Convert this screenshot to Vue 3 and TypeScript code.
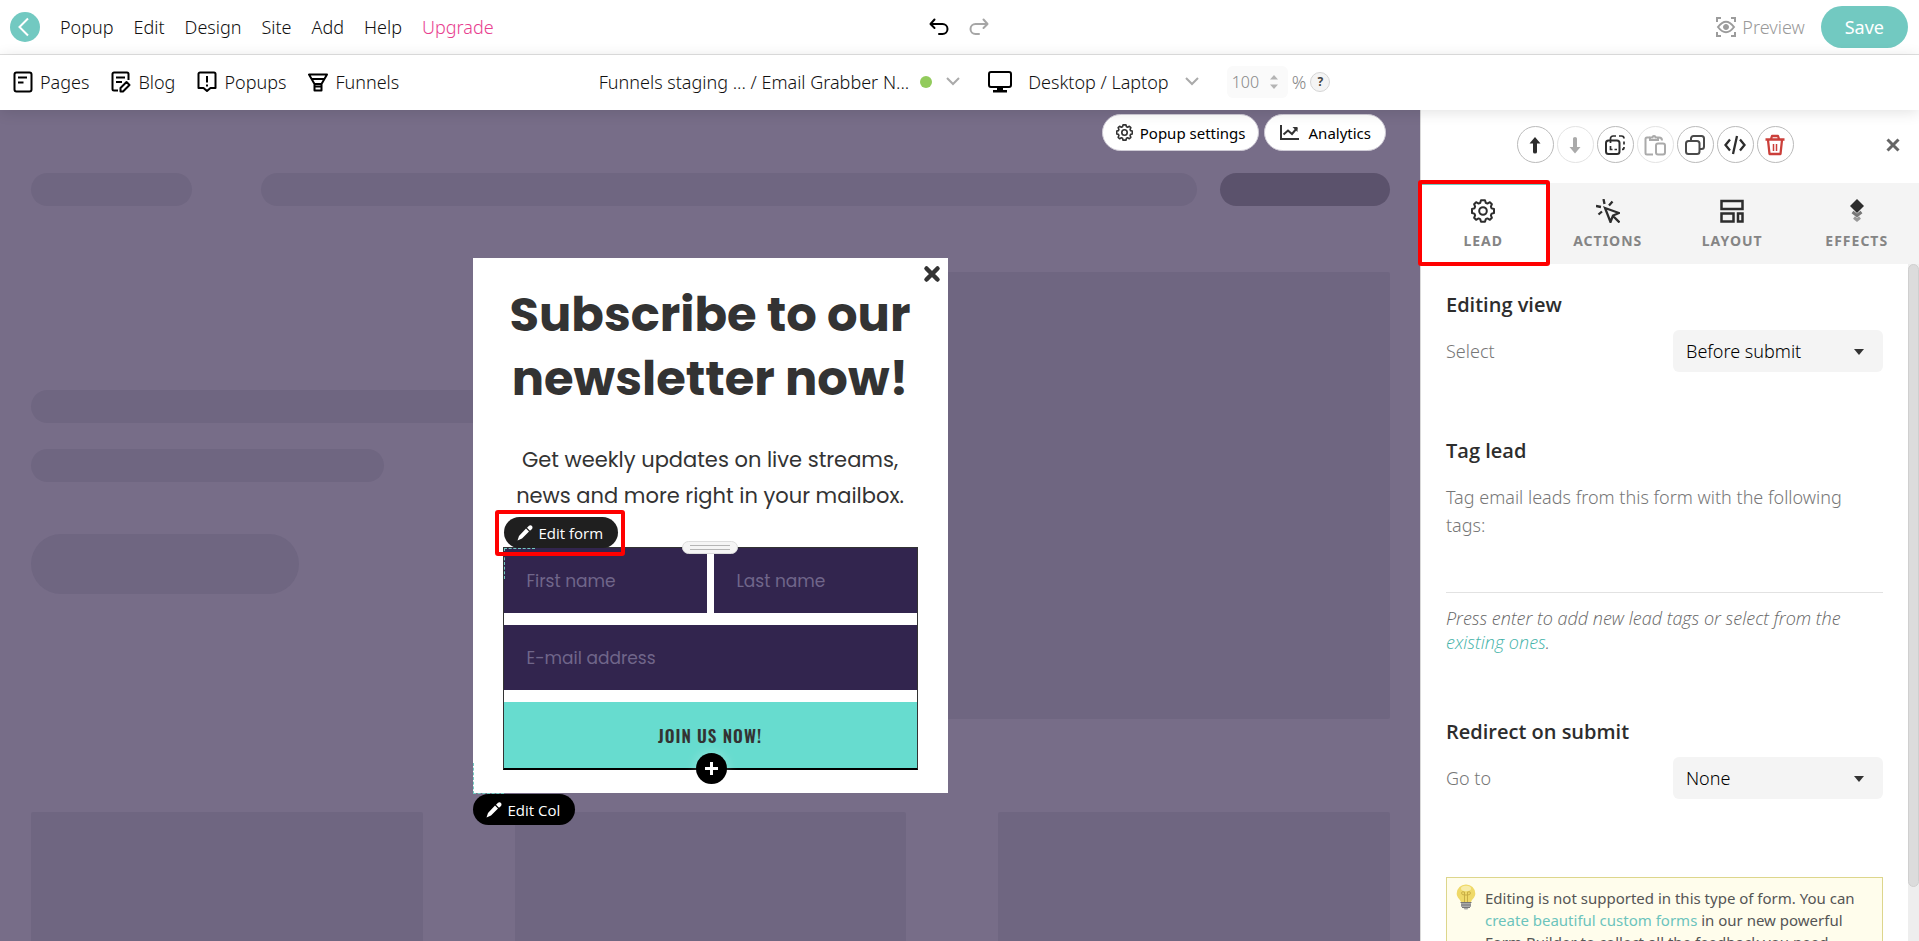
<script setup lang="ts">
import { ref } from 'vue'

interface Item { label: string; icon: string }

const menus: string[] = ['Popup', 'Edit', 'Design', 'Site', 'Add', 'Help']
const sections: Item[] = [
  { label: 'Pages', icon: 'pages' },
  { label: 'Blog', icon: 'blog' },
  { label: 'Popups', icon: 'popups' },
  { label: 'Funnels', icon: 'funnels' },
]
const tabs: Item[] = [
  { label: 'LEAD', icon: 'gear' },
  { label: 'ACTIONS', icon: 'actions' },
  { label: 'LAYOUT', icon: 'layout' },
  { label: 'EFFECTS', icon: 'effects' },
]
const activeTab = ref('LEAD')
const zoomLevel = ref('100')
const editingView = ref('Before submit')
const redirect = ref('None')
const tagText = ref('')
</script>

<template>
  <div class="app">
    <header class="topbar">
      <div class="top-left">
        <button class="back" aria-label="Back">
          <svg width="30" height="30" viewBox="0 0 30 30"><path d="M18 6.500 9.500 15l8.500 8.500" fill="none" stroke="#fff" stroke-width="2" /></svg>
        </button>
        <nav class="menu">
          <a v-for="m in menus" :key="m" href="#">{{ m }}</a>
          <a href="#" class="upgrade">Upgrade</a>
        </nav>
      </div>
      <div class="history">
        <button aria-label="Undo">
          <svg width="20" height="18" viewBox="0 0 20 18" fill="none" stroke="#000" stroke-width="2" stroke-linecap="round" stroke-linejoin="round"><path d="M5.500 1.500 1.500 6l4 4M2 6h11.500a5 5 0 0 1 0 10H10" /></svg>
        </button>
        <button aria-label="Redo" disabled>
          <svg width="20" height="18" viewBox="0 0 20 18" fill="none" stroke="#a6a6a6" stroke-width="2" stroke-linecap="round" stroke-linejoin="round"><path d="M14.500 1.500 18.500 6l-4 4M18 6H6.500a5 5 0 0 0 0 10H10" /></svg>
        </button>
      </div>
      <div class="top-right">
        <button class="preview">
          <svg width="20" height="20" viewBox="0 0 20 20" fill="none" stroke="#9c9c9c" stroke-width="2"><path d="M1 5V1h4M15 1h4v4M19 15v4h-4M5 19H1v-4" /><path d="M2 10q8-10.500 16 0q-8 10.500-16 0Z" /><circle cx="10" cy="10" r="2.500" fill="#9c9c9c" stroke-width="1" /></svg>
          Preview
        </button>
        <button class="save">Save</button>
      </div>
    </header>

    <div class="subbar">
      <nav class="sections">
        <a v-for="s in sections" :key="s.label" href="#">
          <svg width="20" height="22" viewBox="0 0 20 22" fill="none" stroke="#000" stroke-width="2" stroke-linejoin="round">
            <template v-if="s.icon === 'pages'"><rect x="1.500" y="1.500" width="17" height="19" rx="2" /><path d="M5 6.500h9M5 11.500h5.500" /></template>
            <template v-else-if="s.icon === 'blog'"><path d="M17.500 9V3a1.500 1.500 0 0 0-1.500-1.500H3A1.500 1.500 0 0 0 1.500 3v15A1.500 1.500 0 0 0 3 19.500h4M5 6.500h9M5 11h6" /><path d="M9.500 20.500v-3.500l6-6 3 3-6.500 6.500Z" /></template>
            <template v-else-if="s.icon === 'popups'"><path d="M3 1.500h14A1.500 1.500 0 0 1 18.500 3v14h-5L10 20l-3.500-3h-5V3A1.500 1.500 0 0 1 3 1.500ZM10 5v6.500M10 13.500v2" /></template>
            <template v-else><path d="M1 3.500h18L13.500 13H6.500ZM3 8h14M6.500 13v6.500h7V13M6.500 15.500h7" /></template>
          </svg>
          {{ s.label }}
        </a>
      </nav>
      <div class="context">
        <button class="page-picker">
          <span>Funnels staging ... / Email Grabber N...</span>
          <span class="status"></span>
          <svg width="14" height="9" viewBox="0 0 14 9"><path d="M1 1l6 6 6-6" fill="none" stroke="#aaa" stroke-width="2" /></svg>
        </button>
        <button class="device-picker">
          <svg width="24" height="22" viewBox="0 0 24 22"><rect x="1" y="1" width="22" height="15" rx="2" fill="none" stroke="#000" stroke-width="2" /><path d="M9 16h6v3h4v2.500H5V19h4Z" /></svg>
          <span>Desktop / Laptop</span>
          <svg width="14" height="9" viewBox="0 0 14 9"><path d="M1 1l6 6 6-6" fill="none" stroke="#aaa" stroke-width="2" /></svg>
        </button>
        <div class="zoom">
          <div class="zoom-box">
            <input v-model="zoomLevel" aria-label="Zoom" disabled />
            <svg width="16" height="20" viewBox="0 0 16 20" fill="#b4b4b4"><path d="M4 7.500 8 3l4 4.500ZM4 12.500 8 17l4-4.500Z" /></svg>
          </div>
          <span>%</span>
          <button class="help" aria-label="Zoom help">?</button>
        </div>
      </div>
    </div>

    <div class="workspace">
      <main class="canvas">
        <div class="skeleton">
          <div class="sk-head"><i class="sk-logo"></i><i class="sk-nav"></i><i class="sk-cta"></i></div>
          <div class="sk-hero">
            <div class="sk-text"><i class="sk-line"></i><i class="sk-line short"></i><i class="sk-button"></i></div>
            <i class="sk-image"></i>
          </div>
          <div class="sk-cards"><i></i><i></i><i></i></div>
        </div>

        <div class="canvas-tools">
          <button>
            <svg width="17" height="17" viewBox="0 0 24 24" fill="none" stroke="#333" stroke-width="2.300" stroke-linejoin="round"><path d="M10 1.200h4l.8 2.700 1.600.7L18.900 3.200l2 2-1 2.500.7 1.700 2.400.6v4l-2.400.6-.7 1.700 1 2.500-2 2-2.500-1.400-1.600.7-.8 2.700h-4l-.8-2.700-1.600-.7-2.500 1.400-2-2 1-2.500-.7-1.700L1 14v-4l2.400-.6.7-1.700-1-2.500 2-2 2.500 1.400 1.600-.7Z" /><circle cx="12" cy="12" r="3.800" /></svg>
            Popup settings
          </button>
          <button class="analytics">
            <svg width="19" height="16" viewBox="0 0 19 16" fill="none" stroke="#333" stroke-width="2"><path d="M1 0v14h18M3.500 9.500l4.500-4 4 3.500 5-6" /><path d="M12.500 2H17.500v5Z" fill="#333" stroke="none" /></svg>
            Analytics
          </button>
        </div>

        <section class="popup">
          <button class="popup-close" aria-label="Close popup">
            <svg width="18" height="18" viewBox="0 0 18 18"><path d="M3.500 3.500l11 11M14.500 3.500l-11 11" stroke="#333" stroke-width="4.500" stroke-linecap="round" /></svg>
          </button>
          <h1>Subscribe to our newsletter now!</h1>
          <p>Get weekly updates on live streams, news and more right in your mailbox.</p>
          <form class="form" @submit.prevent>
            <div class="names">
              <input type="text" placeholder="First name" aria-label="First name" />
              <input type="text" placeholder="Last name" aria-label="Last name" />
            </div>
            <input type="email" placeholder="E-mail address" aria-label="E-mail address" />
            <button type="submit" class="join">JOIN US NOW!</button>
            <button type="button" class="pill edit-form">
              <svg width="16" height="16" viewBox="0 0 16 16" fill="#fff"><path d="M.5 15.500 2 11l7-7.500L12 6.500 5 13.500ZM10 2.700 12 .8q1.700-1 3 .3 1 1.400 0 2.900L13 5.700Z" /></svg>
              Edit form
            </button>
            <span class="mark-form"></span>
            <span class="highlight highlight-form"></span>
            <span class="handle"></span>
            <button type="button" class="add" aria-label="Add element">
              <svg width="15" height="15" viewBox="0 0 15 15"><path d="M7.500 1v13M1 7.500h13" stroke="#fff" stroke-width="3" /></svg>
            </button>
            <span class="mark-col"></span>
          </form>
          <button class="pill edit-col">
            <svg width="16" height="16" viewBox="0 0 16 16" fill="#fff"><path d="M.5 15.500 2 11l7-7.500L12 6.500 5 13.500ZM10 2.700 12 .8q1.700-1 3 .3 1 1.400 0 2.900L13 5.700Z" /></svg>
            Edit Col
          </button>
        </section>
      </main>

      <aside class="panel">
        <div class="panel-head">
          <div class="tools">
            <button aria-label="Move up"><svg width="22" height="22" viewBox="0 0 22 22"><path d="M11 3l5.500 6.500H13V18q0 1.500-2 1.500T9 18V9.500H5.500Z" fill="#2d2d2d" /></svg></button>
            <button aria-label="Move down" disabled><svg width="22" height="22" viewBox="0 0 22 22"><path d="M11 19.500l5.500-6.500H13V4.500Q13 3 11 3T9 4.500V13H5.500Z" fill="#2d2d2d" /></svg></button>
            <button aria-label="Copy"><svg width="22" height="22" viewBox="0 0 22 22" fill="none" stroke="#2d2d2d" stroke-width="2"><rect x="2" y="6.500" width="13.500" height="13.500" rx="2.500" /><path d="M6.500 9V4.500a2.500 2.500 0 0 1 2.500-2.500h3M15 2h2.500a2.500 2.500 0 0 1 2.500 2.500M20 7.500v3M20 13v.5a2 2 0 0 1-2 2M6.500 12v3.500h2M10.500 15.500H13" stroke-width="1.700" /></svg></button>
            <button aria-label="Paste" disabled><svg width="22" height="22" viewBox="0 0 22 22" fill="none" stroke="#2d2d2d" stroke-width="2"><path d="M5.500 3.500H3A1.500 1.500 0 0 0 1.500 5v14A1.500 1.500 0 0 0 3 20.500h6M15 3.500q3 0 3 3" /><path d="M6 6h8V3.500h-2.500a1.500 1.500 0 0 0-3 0H6Z" /><rect x="12" y="9.500" width="9" height="11" rx="2" /></svg></button>
            <button aria-label="Duplicate"><svg width="22" height="22" viewBox="0 0 22 22" fill="none" stroke="#4a4a4a" stroke-width="2"><rect x="2" y="7" width="13.500" height="13" rx="2.500" /><path d="M7 7V4.500A2.500 2.500 0 0 1 9.500 2h8A2.500 2.500 0 0 1 20 4.500v8a2.500 2.500 0 0 1-2.500 2.500h-2" /></svg></button>
            <button aria-label="Code"><svg width="22" height="22" viewBox="0 0 22 22" fill="none" stroke="#2d2d2d" stroke-width="2.300"><path d="M6 5.500 1.500 11l4.500 5.500M16 5.500l4.500 5.500-4.500 5.500M13 2l-4 18" /></svg></button>
            <button aria-label="Delete"><svg width="22" height="22" viewBox="0 0 22 22" fill="none" stroke="#cb3f3a" stroke-width="2.300"><path d="M1.500 5.500h19M7 5l1-3h6l1 3M4 6l1.500 14h11L18 6" stroke-linejoin="round" /><path d="M9.500 10v7M12.500 10v7" stroke-width="1.500" /></svg></button>
          </div>
          <button class="panel-close" aria-label="Close panel"><svg width="14" height="14" viewBox="0 0 14 14"><path d="M1.500 1.500l11 11M12.500 1.500l-11 11" stroke="#666" stroke-width="3" /></svg></button>
        </div>

        <div class="tabs" role="tablist">
          <button v-for="t in tabs" :key="t.label" role="tab" :aria-selected="activeTab === t.label" :class="{ active: activeTab === t.label }" @click="activeTab = t.label">
            <svg width="24" height="24" viewBox="0 0 24 24" fill="none" stroke="#2d2d2d" stroke-width="2">
              <template v-if="t.icon === 'gear'"><path d="M10 1.200h4l.8 2.700 1.600.7L18.900 3.200l2 2-1 2.500.7 1.700 2.400.6v4l-2.400.6-.7 1.700 1 2.500-2 2-2.500-1.400-1.600.7-.8 2.700h-4l-.8-2.700-1.600-.7-2.500 1.400-2-2 1-2.500-.7-1.700L1 14v-4l2.400-.6.7-1.700-1-2.500 2-2 2.500 1.400 1.600-.7Z" stroke-linejoin="round" /><circle cx="12" cy="12" r="3.800" /></template>
              <template v-else-if="t.icon === 'actions'"><path d="M9 9l14 5-6 2.500L14.500 23ZM17 17l6.500 6.500" stroke-width="2.300" /><path d="M7.500 0l1 5M0 7l5 1M16.500 2.500 13 6.500M2.500 15.500l3.500-3" stroke-width="2.300" /></template>
              <template v-else-if="t.icon === 'layout'"><path d="M1.500 2h21v8h-21ZM1.500 14.500h12v8h-12ZM18 14.500h4.500v8H18Z" stroke-width="2.500" /></template>
              <template v-else><path d="M12 0l7 7-7 7-7-7Z" fill="#2d2d2d" stroke="none" /><path d="M7.500 13l4.500 3.500 4.500-3.500" stroke="#777" stroke-width="3" /><path d="M9 18.500l3 2.500 3-2.500" stroke="#999" stroke-width="3" /></template>
            </svg>
            {{ t.label }}
          </button>
          <span class="highlight highlight-tab"></span>
        </div>

        <div class="panel-body">
          <div class="settings">
            <section>
              <h2>Editing view</h2>
              <div class="field">
                <label for="view">Select</label>
                <div class="select">
                  <select id="view" v-model="editingView"><option>Before submit</option><option>After submit</option></select>
                  <svg width="10" height="6" viewBox="0 0 10 6"><path d="M0 0h10L5 6Z" fill="#333" /></svg>
                </div>
              </div>
            </section>
            <section class="tag">
              <h2>Tag lead</h2>
              <label for="tags">Tag email leads from this form with the following tags:</label>
              <input id="tags" v-model="tagText" type="text" />
              <p>Press enter to add new lead tags or select from the <a href="#">existing ones</a>.</p>
            </section>
            <section class="redirect">
              <h2>Redirect on submit</h2>
              <div class="field">
                <label for="goto">Go to</label>
                <div class="select">
                  <select id="goto" v-model="redirect"><option>None</option><option>Page</option></select>
                  <svg width="10" height="6" viewBox="0 0 10 6"><path d="M0 0h10L5 6Z" fill="#333" /></svg>
                </div>
              </div>
            </section>
            <div class="notice">
              <svg width="20" height="26" viewBox="0 0 20 26">
                <path d="M10 .5a9 9 0 0 0-9.300 9c0 4 3.300 5.500 4.300 8.500h10c1-3 4.300-4.500 4.300-8.500A9 9 0 0 0 10 .5Z" fill="#efd968" />
                <ellipse cx="10" cy="4.500" rx="5" ry="2.800" fill="#f7eca9" />
                <path d="M8.500 18v-7M11.500 18v-7M8.500 11q-3 0-3-2t3-1v3h3V8q3-1 3 1t-3 2" fill="none" stroke="#c9ae45" />
                <path d="M5 18h10v5h-2l-1.500 2.500h-3L7 23H5Z" fill="#aaa" />
                <path d="M4.500 18.500h11M5 21h10M6 23.500h8" stroke="#777" />
              </svg>
              <p>Editing is not supported in this type of form. You can <a href="#">create beautiful custom forms</a> in our new powerful Form Builder to collect all the feedback you need.</p>
            </div>
          </div>
          <div class="scrollbar"><i></i></div>
        </div>
      </aside>
    </div>
  </div>
</template>

<style>
body { margin: 0; overflow: hidden; }
</style>

<style scoped>
* { box-sizing: border-box; }
.app {
  height: 100vh;
  display: flex;
  flex-direction: column;
  font-family: 'Noto Sans', 'Open Sans', sans-serif;
  font-weight: 300;
  font-size: 18px;
  color: #111;
  background: #fff;
}
button, input, select { font: inherit; color: inherit; border: 0; background: none; padding: 0; margin: 0; }
button { display: flex; align-items: center; justify-content: center; cursor: pointer; white-space: nowrap; }
a { color: inherit; text-decoration: none; }
svg { display: block; flex: none; }
h1, h2, p { margin: 0; }

.topbar { height: 55px; display: grid; grid-template-columns: 1fr auto 1fr; align-items: center; border-bottom: 1px solid #e2e2e2; padding: 0 11px 0 10px; }
.top-left, .menu, .sections, .context, .history, .top-right { display: flex; align-items: center; }
.top-left { gap: 20px; }
.back { width: 30px; height: 30px; border-radius: 50%; background: #72c9c1; }
.menu { gap: 20px; }
.upgrade { color: #e83e8f; }
.history { gap: 20px; }
.top-right { justify-content: flex-end; gap: 16px; }
.preview { gap: 6px; color: #999; }
.save { height: 42px; padding: 0 24px; border-radius: 21px; background: #72c9c1; color: #fff; font-weight: 400; }

.subbar { position: relative; z-index: 3; height: 55px; display: grid; grid-template-columns: 1fr auto 1fr; align-items: center; background: #fff; padding: 0 13px 2px; box-shadow: 0 2px 14px rgba(0, 0, 0, 0.12); }
.sections { gap: 22px; }
.sections a { display: flex; align-items: center; gap: 7px; }
.context { padding-left: 10px; gap: 28px; }
.page-picker { gap: 11px; }
.page-picker svg { margin-left: 3px; }
.device-picker { gap: 16px; }
.status { width: 12px; height: 12px; border-radius: 50%; background: #92cb5c; }
.zoom { display: flex; align-items: center; gap: 4px; color: #888; }
.zoom-box { display: flex; align-items: center; width: 61px; height: 32px; padding: 0 5px; border-radius: 6px; background: #fafafa; font-size: 16px; }
.zoom-box input { width: 34px; }
.help { width: 20px; height: 20px; border: 1px solid #d5d5d5; border-radius: 50%; background: #f4f4f4; font-size: 12px; font-weight: 700; color: #444; }

.workspace { flex: 1; min-height: 0; display: flex; }
.canvas { position: relative; flex: 1; min-width: 0; overflow: hidden; background: #776d88; display: grid; }
.skeleton { grid-area: 1 / 1; height: 0; padding: 63px 30px 0 31px; }
.skeleton i { display: block; background: #6f6681; border-radius: 2px; }
.sk-head { display: flex; height: 33px; }
.skeleton .sk-head i { border-radius: 17px; }
.sk-logo { width: 161px; margin-right: 69px; }
.sk-nav { flex: 1; margin-right: 23px; }
.skeleton .sk-cta { width: 170px; background: #5b526c; }
.sk-hero { display: grid; grid-template-columns: 1fr 1fr; gap: 50px; margin-top: 66px; height: 447px; }
.sk-text { padding-top: 118px; }
.skeleton .sk-line { height: 33px; border-radius: 17px; margin-bottom: 26px; }
.skeleton .short { width: 353px; }
.skeleton .sk-button { width: 268px; height: 60px; border-radius: 30px; margin-top: 52px; }
.sk-cards { display: grid; grid-template-columns: repeat(3, 1fr); gap: 92px; margin-top: 93px; }
.sk-cards i { height: 200px; }

.canvas-tools { position: absolute; top: 4px; right: 34px; display: flex; gap: 5px; }
.canvas-tools button { height: 37px; padding: 0 12px 0 13px; gap: 7px; border: 1px solid #cfcbd6; border-radius: 19px; background: #fff; color: #000; font-size: 15px; font-weight: 400; }
.canvas-tools .analytics { padding: 0 14px 0 15px; gap: 10px; }

.popup { grid-area: 1 / 1; place-self: center; position: relative; width: 475px; height: 535px; background: #fff; padding: 25px 30px; color: #333; font-family: Poppins, sans-serif; text-align: center; }
.popup-close { position: absolute; top: 7px; right: 7px; }
h1 { font-size: 48px; line-height: 64px; font-weight: 700; }
.popup > p { margin-top: 31px; font-size: 21px; line-height: 36px; font-weight: 400; }
.form { position: relative; margin-top: 33px; border: 1px solid #333; border-bottom: 2px solid #000; display: grid; gap: 12px; }
.names { display: grid; grid-template-columns: 1fr 1fr; gap: 7px; }
.form input { width: 100%; min-width: 0; height: 65px; padding: 0 23px; background: #32254e; font-size: 17px; font-weight: 400; border-radius: 0; }
.form input::placeholder { color: #70668a; opacity: 1; }
.join { height: 66px; background: #67dccf; color: #333; font-family: Oswald, 'Roboto Condensed', sans-serif; font-size: 17px; font-weight: 600; letter-spacing: 1px; }
.pill { position: absolute; height: 31px; padding: 0 15px 0 13px; gap: 6px; border-radius: 16px; background: #000; color: #fff; font-family: 'Open Sans', 'Noto Sans', sans-serif; font-size: 15px; font-weight: 400; }
.edit-form { left: 0; bottom: 100%; background: #1f1f1f; }
.edit-col { left: 0; top: 100%; margin-top: 1px; }
.mark-form { position: absolute; left: 0; top: 0; width: 31px; height: 31px; border: 1px dashed #72c9c1; border-width: 1px 0 0 1px; }
.mark-col { position: absolute; left: -31px; bottom: -26px; width: 31px; height: 31px; border: 1px dashed #72c9c1; border-width: 0 0 1px 1px; }
.handle { position: absolute; left: 50%; top: -7px; width: 56px; height: 13px; margin-left: -28px; border: 1px solid #ddd; border-radius: 7px; background: #f5f5f5; }
.handle::before { content: ''; position: absolute; inset: 3px 7px; border: 1px solid #b5b5b5; border-width: 1px 0; }
.add { position: absolute; left: 50%; bottom: -16px; width: 31px; height: 31px; margin-left: -14px; border-radius: 50%; background: #000; box-shadow: 0 0 12px rgba(255, 255, 255, 0.3); }
.highlight { position: absolute; border: 4px solid #f00; border-radius: 3px; pointer-events: none; }
.highlight-form { left: -9px; top: -38px; width: 130px; height: 46px; }
.highlight-tab { left: -3px; top: -3px; width: 132px; height: 86px; }

.panel { width: 499px; flex: none; display: flex; flex-direction: column; border-left: 1px solid #d9d9d9; background: #fff; }
.panel-head { height: 73px; flex: none; display: flex; align-items: center; padding: 0 14px 4px 8px; }
.tools { flex: 1; display: flex; justify-content: center; gap: 3px; }
.tools button { width: 37px; height: 37px; border: 1px solid #bbb; border-radius: 50%; }
.tools button:disabled { opacity: 0.4; }
.panel-close { width: 24px; }
.tabs { position: relative; flex: none; height: 81px; display: grid; grid-template-columns: repeat(4, 1fr); background: #f4f4f4; }
.tabs button { flex-direction: column; gap: 8px; border-top: 2px solid transparent; font-size: 14px; line-height: 20px; font-weight: 700; letter-spacing: 1px; color: #858585; }
.tabs .active { background: #fff; border-top-color: #72c9c1; }

.panel-body { flex: 1; min-height: 0; display: flex; overflow: hidden; }
.settings { flex: 1; min-width: 0; padding: 27px 25px 0; }
.scrollbar { width: 11px; background: #eee; }
.scrollbar i { display: block; height: 92%; border: 1px solid #cfcfcf; border-radius: 6px; background: #dcdcdc; }
h2 { font-family: 'Open Sans', 'Noto Sans', sans-serif; font-size: 20px; line-height: 28px; font-weight: 600; color: #2d2d2d; }
.field { display: flex; align-items: center; justify-content: space-between; height: 42px; margin-top: 11px; }
label { color: #777; }
.select { position: relative; width: 210px; }
.select select { width: 100%; height: 42px; padding: 0 13px; border-radius: 6px; background: #f4f4f4; appearance: none; color: #000; }
.select svg { position: absolute; right: 19px; top: 19px; pointer-events: none; }
.tag { margin-top: 65px; }
.tag label { display: block; margin-top: 18px; line-height: 28px; }
.tag input { display: block; width: 100%; height: 54px; border-bottom: 1px solid #e2e2e2; }
.tag p { margin-top: 13px; font-family: 'Open Sans', 'Noto Sans', sans-serif; line-height: 24px; font-style: italic; color: #666; }
.tag p a { color: #45b3a9; }
.notice a { color: #6cc4bc; }
.redirect { margin-top: 64px; }
.notice { display: flex; gap: 9px; margin-top: 78px; padding: 6px 9px 9px; border: 1px solid #ddd68c; background: #fffdec; }
.notice p { padding-top: 3px; font-size: 15px; line-height: 22px; font-weight: 400; color: #555; }
</style>
